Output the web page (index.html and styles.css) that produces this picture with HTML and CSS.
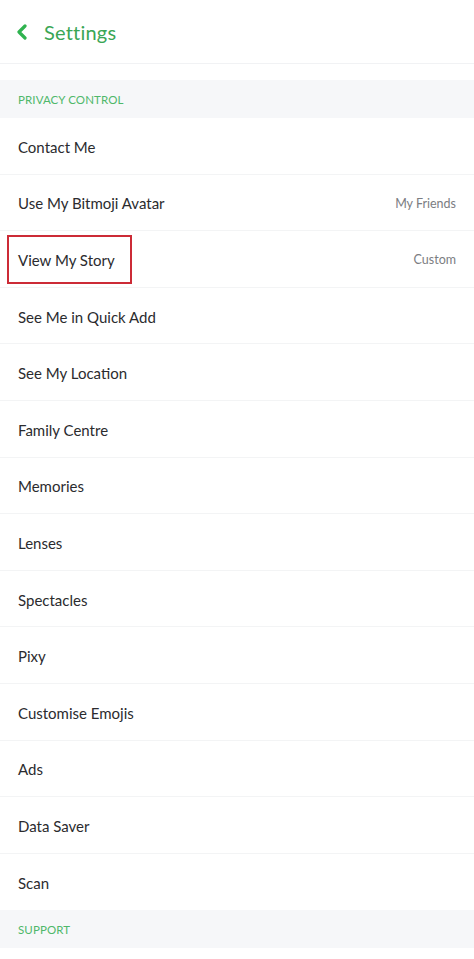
FILE: index.html
```html
<!DOCTYPE html>
<html lang="en">
<head>
    <meta charset="UTF-8">
    <meta name="viewport" content="width=device-width, initial-scale=1.0">
    <title>Settings</title>
    <link rel="stylesheet" href="styles.css">
</head>
<body>
    <div id="screen">
        <div class="topbar">
            <svg class="back" viewBox="0 0 12 16" width="12" height="16">
                <path d="M9 2 L3 8 L9 14" />
            </svg>
            <span class="title">Settings</span>
        </div>

        <div class="section">PRIVACY CONTROL</div>
        <ul class="rows">
            <li class="row"><span>Contact Me</span></li>
            <li class="row"><span>Use My Bitmoji Avatar</span><span class="value">My Friends</span></li>
            <li class="row"><span class="marked">View My Story</span><span class="value">Custom</span></li>
            <li class="row"><span>See Me in Quick Add</span></li>
            <li class="row"><span>See My Location</span></li>
            <li class="row"><span>Family Centre</span></li>
            <li class="row"><span>Memories</span></li>
            <li class="row"><span>Lenses</span></li>
            <li class="row"><span>Spectacles</span></li>
            <li class="row"><span>Pixy</span></li>
            <li class="row"><span>Customise Emojis</span></li>
            <li class="row"><span>Ads</span></li>
            <li class="row"><span>Data Saver</span></li>
            <li class="row last"><span>Scan</span></li>
        </ul>
        <div class="section">SUPPORT</div>
    </div>
</body>
</html>
```

FILE: styles.css
```css
body {
    margin: 0;
    background: #fff;
    font-family: Lato, "Open Sans", sans-serif;
    color: #2b2b2e;
}

#screen {
    width: 474px;
    height: 959px;
    overflow: hidden;
}

.topbar {
    height: 63px;
    display: flex;
    align-items: center;
    gap: 16px;
    padding-left: 16px;
    border-bottom: 1px solid #f1f2f4;
    margin-bottom: 16px;
}
.topbar .back path {
    fill: none;
    stroke: #2fb34f;
    stroke-width: 3.2;
    stroke-linecap: round;
    stroke-linejoin: round;
}
.topbar .title {
    color: #3aa655;
    font-size: 20px;
    letter-spacing: 0.2px;
}

.section {
    height: 38px;
    background: #f6f7f9;
    display: flex;
    align-items: center;
    padding-left: 18px;
    color: #4fb86a;
    font-size: 11.5px;
    letter-spacing: 0.1px;
}

.rows {
    list-style: none;
    margin: 0;
    padding: 0;
}
.row {
    height: 56.6px;
    box-sizing: border-box;
    display: flex;
    align-items: center;
    justify-content: space-between;
    padding: 2px 18px 0;
    font-size: 15px;
    border-bottom: 1px solid #f3f4f5;
}
.row.last {
    border-bottom: none;
}
.row .value {
    color: #7b7d82;
    font-size: 12.5px;
}
.row .marked {
    position: relative;
}
.row .marked::before {
    content: "";
    position: absolute;
    left: -11px;
    right: -17px;
    top: -16px;
    bottom: -15px;
    border: 2px solid #cc2b36;
}
```
